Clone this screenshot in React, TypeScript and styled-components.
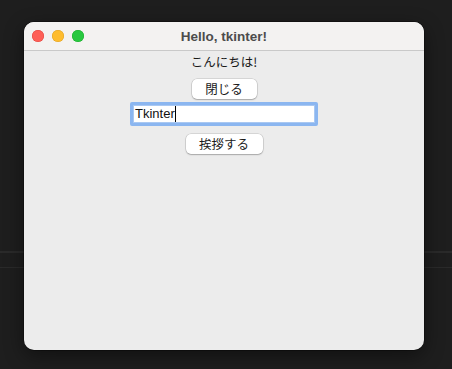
import React from "react";
import styled, { createGlobalStyle } from "styled-components";

const Global = createGlobalStyle`
  html, body {
    margin: 0;
    padding: 0;
    width: 452px;
    height: 369px;
    overflow: hidden;
    background-color: #1e1e1e;
    background-image:
      linear-gradient(to bottom, transparent 251px, #2a2a2a 251px, #2a2a2a 253px, transparent 253px),
      linear-gradient(to bottom, transparent 267px, #2a2a2a 267px, #2a2a2a 268px, transparent 268px);
    font-family: "Liberation Sans", "Noto Sans CJK JP", sans-serif;
  }
`;

const Desktop = styled.div`
  padding: 22px 0 0 24px;
`;

const Window = styled.div`
  width: 400px;
  height: 328px;
  border-radius: 10px;
  overflow: hidden;
  background: #ececec;
  display: flex;
  flex-direction: column;
  box-shadow: 0 0 0 0.5px rgba(0, 0, 0, 0.6), 0 6px 20px rgba(0, 0, 0, 0.45);
`;

const TitleBar = styled.div`
  height: 28px;
  flex: 0 0 28px;
  background: #f3f2f1;
  border-bottom: 1px solid #c9c9c9;
  display: flex;
  align-items: center;
  position: relative;
`;

const Lights = styled.div`
  display: flex;
  gap: 8px;
  padding-left: 8px;
`;

const Light = styled.span<{ $c: string; $b: string }>`
  width: 12px;
  height: 12px;
  border-radius: 50%;
  background: ${(p) => p.$c};
  box-shadow: inset 0 0 0 0.5px ${(p) => p.$b};
`;

const Title = styled.div`
  position: absolute;
  left: 0;
  right: 0;
  text-align: center;
  font-family: "Liberation Sans", sans-serif;
  font-weight: bold;
  font-size: 13.5px;
  color: #4c4c4c;
  pointer-events: none;
`;

const Content = styled.div`
  flex: 1;
  display: flex;
  flex-direction: column;
  align-items: center;
  padding-top: 3px;
`;

const Label = styled.div`
  font-family: "Noto Sans CJK JP", sans-serif;
  font-size: 12.5px;
  line-height: 16px;
  color: #1a1a1a;
  margin-bottom: 9px;
`;

const Button = styled.button<{ $w: number }>`
  width: ${(p) => p.$w}px;
  height: 20px;
  padding: 0;
  border: none;
  border-radius: 5px;
  background: #ffffff;
  box-shadow: 0 0 0 0.5px rgba(0, 0, 0, 0.18), 0 1px 1.5px rgba(0, 0, 0, 0.22);
  font-family: "Noto Sans CJK JP", sans-serif;
  font-size: 12.5px;
  line-height: 20px;
  color: #1a1a1a;
`;

const EntryBox = styled.div`
  width: 188px;
  height: 24px;
  box-sizing: border-box;
  margin: 3px 0 8px;
  border: 3px solid #8bb6f0;
  border-radius: 2px;
  background: #ffffff;
  box-shadow: inset 0 0 0 1px #a9c8f2;
  display: flex;
  align-items: center;
  padding-left: 2px;
`;

const EntryText = styled.span`
  font-family: "Liberation Sans", sans-serif;
  font-size: 13px;
  color: #111;
  line-height: 16px;
`;

const Caret = styled.span`
  width: 1px;
  height: 16px;
  background: #000;
`;

export default function App() {
  return (
    <>
      <Global />
      <Desktop>
        <Window>
          <TitleBar>
            <Lights>
              <Light $c="#fe5f57" $b="#e0443e" />
              <Light $c="#febc2e" $b="#dea123" />
              <Light $c="#28c840" $b="#1aab29" />
            </Lights>
            <Title>Hello, tkinter!</Title>
          </TitleBar>
          <Content>
            <Label>こんにちは!</Label>
            <Button $w={65}>閉じる</Button>
            <EntryBox>
              <EntryText>Tkinter</EntryText>
              <Caret />
            </EntryBox>
            <Button $w={77}>挨拶する</Button>
          </Content>
        </Window>
      </Desktop>
    </>
  );
}
